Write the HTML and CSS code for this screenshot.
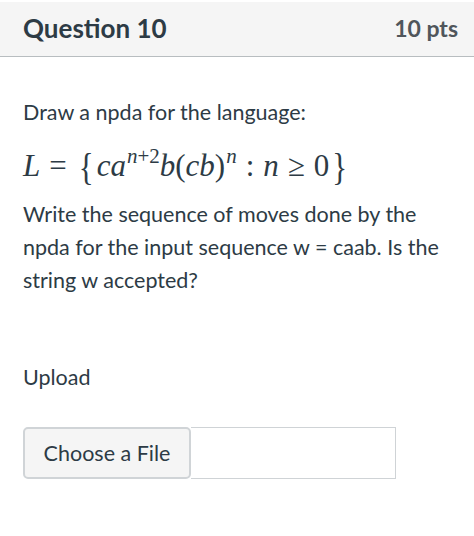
FILE: index.html
```html
<!DOCTYPE html>
<html>
<head>
<meta charset="utf-8">
<link rel="stylesheet" href="styles.css">
</head>
<body>
<div class="question">
  <div class="header">
    <span class="title">Question 10</span>
    <span class="points">10 pts</span>
  </div>
  <div class="content">
    <p class="text first">Draw a npda for the language:</p>
    <div class="math"><i>L</i><span class="rel">=</span><span class="brace">{</span><i>ca</i><sup><i>n</i>+2</sup><i>b</i>(<i>cb</i>)<sup><i>n</i></sup><span class="rel">:</span><i>n</i><span class="rel">≥</span>0<span class="brace">}</span></div>
    <p class="text">Write the sequence of moves done by the npda for the input sequence w = caab. Is the string w accepted?</p>
    <p class="text upload">Upload</p>
    <div class="file">
      <span class="btn">Choose a File</span>
      <span class="field"></span>
    </div>
  </div>
</div>
</body>
</html>
```

FILE: styles.css
```css
html, body {
  margin: 0;
  padding: 0;
  background: #fff;
}
body {
  font-family: Lato, "Open Sans", sans-serif;
  color: #2d3b45;
  width: 474px;
  height: 536px;
  overflow: hidden;
}
.question {
  padding-top: 2px;
}
.header {
  display: flex;
  justify-content: space-between;
  align-items: center;
  height: 55px;
  box-sizing: border-box;
  padding: 0 16px 2px 23px;
  background: #f5f5f5;
  border-bottom: 1px solid #b8bdc0;
}
.title {
  font-size: 26px;
  font-weight: 700;
  color: #2d3b45;
}
.points {
  font-size: 23px;
  font-weight: 700;
  color: #50565b;
}
.content {
  padding: 0 23px;
}
.text {
  margin: 0;
  font-size: 21.5px;
  line-height: 33px;
}
.text.first {
  margin-top: 39px;
}
.math {
  font-family: "Liberation Serif", "DejaVu Serif", serif;
  font-size: 31px;
  line-height: 40px;
  margin: 17px 0 9px;
  white-space: nowrap;
}
.math sup {
  font-size: 21px;
  vertical-align: 0;
  position: relative;
  top: -13px;
  margin-left: 1px;
}
.math .rel {
  margin: 0 9px;
}
.math .brace {
  display: inline-block;
  transform: scaleY(1.2) translateY(2px);
  margin: 0 3px;
}
.upload {
  margin-top: 64px;
}
.file {
  display: flex;
  margin-top: 33px;
  width: 373px;
  height: 52px;
}
.btn {
  display: flex;
  align-items: center;
  justify-content: center;
  width: 168px;
  box-sizing: border-box;
  background: #f5f5f5;
  border: 2px solid #d0d4d7;
  border-radius: 5px;
  font-size: 21.5px;
  color: #2d3b45;
}
.field {
  flex: 1;
  border: 1px solid #cfd3d6;
  border-left: none;
}
```
